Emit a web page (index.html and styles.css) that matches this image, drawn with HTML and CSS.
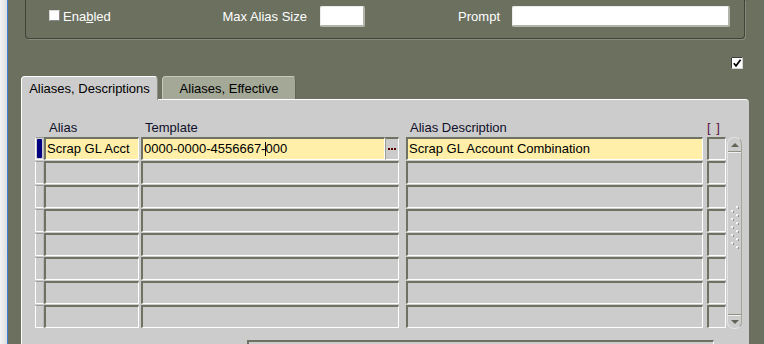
FILE: index.html
```html
<!DOCTYPE html>
<html lang="en">

<head>
  <meta charset="UTF-8">
  <meta name="viewport" content="width=device-width, initial-scale=1.0">
  <title>Account Aliases</title>
  <link rel="stylesheet" href="styles.css">
</head>

<body>
  <div class="window">
    <div class="edge"></div>
    <div class="canvas">

      <!-- header block -->
      <div class="frame">
        <label class="check-label"><span class="check"></span>Ena<u>b</u>led</label>
        <span class="field-prompt prompt-size">Max Alias Size</span>
        <span class="text-input input-size"></span>
        <span class="field-prompt prompt-prompt">Prompt</span>
        <span class="text-input input-prompt"></span>
      </div>

      <div class="options">
        <svg width="12" height="12" viewBox="0 0 12 12">
          <rect x="0.5" y="0.5" width="11" height="11" fill="#fff" stroke="#d4d4d4" />
          <path d="M0.5 11.5V0.5H11.5" fill="none" stroke="#3c3c3c" />
          <path d="M2.8 6.2l2.2 2.6L9.6 2.8" fill="none" stroke="#000" stroke-width="1.7" />
        </svg>
      </div>

      <div class="tabs">
        <div class="tab active">Aliases, Descriptions</div>
        <div class="tab">Aliases, Effective</div>
      </div>

      <div class="panel">
        <div class="grid-head">
          <span class="head-ind"></span>
          <span class="head-alias">Alias</span>
          <span class="head-template">Template</span>
          <span class="head-desc">Alias Description</span>
          <span class="head-dff">[ ]</span>
        </div>

        <div class="grid-body">
          <div class="rows">
            <div class="row current">
              <span class="ind"><span class="ind-mark"></span></span>
              <span class="cell alias">Scrap GL Acct</span>
              <span class="cell template short">0000-0000-4556667-<span class="caret"></span>000</span>
              <span class="lov"><svg width="8" height="2" viewBox="0 0 8 2"><rect x="0" y="0" width="2" height="2" fill="#5a0000" /><rect x="3" y="0" width="2" height="2" fill="#5a0000" /><rect x="6" y="0" width="2" height="2" fill="#5a0000" /></svg></span>
              <span class="cell desc">Scrap GL Account Combination</span>
              <span class="cell dff"></span>
            </div>
            <div class="row">
              <span class="ind"></span><span class="cell alias"></span><span class="cell template"></span><span class="cell desc"></span><span class="cell dff"></span>
            </div>
            <div class="row">
              <span class="ind"></span><span class="cell alias"></span><span class="cell template"></span><span class="cell desc"></span><span class="cell dff"></span>
            </div>
            <div class="row">
              <span class="ind"></span><span class="cell alias"></span><span class="cell template"></span><span class="cell desc"></span><span class="cell dff"></span>
            </div>
            <div class="row">
              <span class="ind"></span><span class="cell alias"></span><span class="cell template"></span><span class="cell desc"></span><span class="cell dff"></span>
            </div>
            <div class="row">
              <span class="ind"></span><span class="cell alias"></span><span class="cell template"></span><span class="cell desc"></span><span class="cell dff"></span>
            </div>
            <div class="row">
              <span class="ind"></span><span class="cell alias"></span><span class="cell template"></span><span class="cell desc"></span><span class="cell dff"></span>
            </div>
            <div class="row">
              <span class="ind"></span><span class="cell alias"></span><span class="cell template"></span><span class="cell desc"></span><span class="cell dff"></span>
            </div>
          </div>

          <div class="scrollbar">
            <div class="sb-btn sb-up"><span class="arrow-up"></span></div>
            <div class="sb-track">
              <svg class="grip" width="8" height="44" viewBox="0 0 8 44">
                <g fill="#f4f4f4">
                  <rect x="5" y="0" width="2" height="2" /><rect x="5" y="8" width="2" height="2" />
                  <rect x="5" y="16" width="2" height="2" /><rect x="5" y="24" width="2" height="2" />
                  <rect x="5" y="32" width="2" height="2" /><rect x="5" y="40" width="2" height="2" />
                  <rect x="0" y="4" width="2" height="2" /><rect x="0" y="12" width="2" height="2" />
                  <rect x="0" y="20" width="2" height="2" /><rect x="0" y="28" width="2" height="2" />
                  <rect x="0" y="36" width="2" height="2" />
                </g>
                <g fill="#8e9282">
                  <rect x="7" y="1" width="1" height="2" /><rect x="7" y="9" width="1" height="2" />
                  <rect x="7" y="17" width="1" height="2" /><rect x="7" y="25" width="1" height="2" />
                  <rect x="7" y="33" width="1" height="2" /><rect x="7" y="41" width="1" height="2" />
                  <rect x="2" y="5" width="1" height="2" /><rect x="2" y="13" width="1" height="2" />
                  <rect x="2" y="21" width="1" height="2" /><rect x="2" y="29" width="1" height="2" />
                  <rect x="2" y="37" width="1" height="2" />
                </g>
              </svg>
            </div>
            <div class="sb-btn sb-down"><span class="arrow-down"></span></div>
          </div>
        </div>

        <div class="footer-field"></div>
      </div>

    </div>
  </div>
</body>

</html>
```

FILE: styles.css
```css
body {
  margin: 0;
  font-family: "Liberation Sans", Arial, sans-serif;
  font-size: 13px;
  background-color: #6b705f;
  overflow: hidden;
}

.window {
  display: flex;
  height: 344px;
}

.edge {
  width: 7px;
  background: linear-gradient(to right, #f4f4f4, #dedede);
  border-right: 1px solid #3b7fd4;
}

.canvas {
  flex: 1;
  display: flex;
  flex-direction: column;
}

/* top group box */
.frame {
  display: flex;
  flex-shrink: 0;
  align-items: center;
  box-sizing: border-box;
  height: 39px;
  width: 720px;
  margin-left: 17px;
  padding-bottom: 5px;
  border: 1px solid #3f4438;
  border-top: none;
  border-radius: 0 0 4px 4px;
  box-shadow: 1px 1px 0 #878b7b;
  color: #fff;
}

.check-label {
  display: flex;
  align-items: center;
  width: 111px;
  margin-left: 23px;
}

.check {
  box-sizing: border-box;
  width: 11px;
  height: 11px;
  margin: -2px 3px 0 0;
  background: #fff;
  border: 1px solid #d8d8d8;
  border-right-color: #8a8a8a;
  border-bottom-color: #8a8a8a;
}

.field-prompt {
  text-align: right;
}

.prompt-size {
  width: 147px;
}

.prompt-prompt {
  width: 135px;
}

.text-input {
  box-sizing: border-box;
  height: 21px;
  background: #fff;
  border: 1px solid #ececec;
  border-right: 2px solid #b2b4aa;
  border-bottom: 2px solid #b2b4aa;
  border-radius: 2px;
}

.input-size {
  width: 45px;
  margin-left: 13px;
}

.input-prompt {
  width: 218px;
  margin-left: 12px;
}

.options {
  display: flex;
  flex-shrink: 0;
  justify-content: flex-end;
  box-sizing: border-box;
  height: 37px;
  padding: 18px 21px 0 0;
}

/* tabs */
.tabs {
  display: flex;
  flex-shrink: 0;
  align-items: flex-end;
  height: 23px;
  padding-left: 13px;
}

.tab {
  box-sizing: border-box;
  height: 23px;
  padding-top: 3px;
  line-height: 18px;
  text-align: center;
  color: #000;
  border-radius: 4px 4px 0 0;
}

.tab.active {
  position: relative;
  z-index: 1;
  width: 137px;
  height: 24px;
  margin-bottom: -1px;
  background: #cccccc;
  border-top: 1px solid #fff;
  border-left: 1px solid #fff;
  border-right: 1px solid #8c9080;
}

.tab:not(.active) {
  width: 134px;
  margin-left: 4px;
  background: #a3a897;
  border-top: 1px solid #c6cabb;
  border-left: 1px solid #c6cabb;
  border-right: 1px solid #5f6455;
}

.panel {
  flex: 1 0 auto;
  box-sizing: border-box;
  width: 728px;
  margin-left: 13px;
  padding: 20px 0 0 13px;
  background: #cccccc;
  border-top: 1px solid #fff;
  border-left: 1px solid #fff;
  border-radius: 0 4px 0 0;
}

/* multi-row block */
.grid-head {
  display: flex;
  height: 17px;
  line-height: 16px;
  color: #10102a;
  white-space: nowrap;
}

.head-ind {
  width: 9px;
}

.head-alias {
  width: 92px;
  padding-left: 5px;
}

.head-template {
  width: 261px;
  padding-left: 4px;
}

.head-desc {
  width: 297px;
  padding-left: 4px;
}

.head-dff {
  width: 19px;
  color: #5a1040;
  letter-spacing: 1px;
}

.grid-body {
  display: flex;
}

.rows {
  display: flex;
  flex-direction: column;
}

.row {
  display: flex;
  height: 23px;
  margin-bottom: 1px;
}

.ind {
  box-sizing: border-box;
  width: 9px;
  padding: 1px;
  border: 1px solid #fff;
  border-top-color: #9c9c9c;
  border-right-color: #b8b8b8;
}

.ind-mark {
  display: block;
  height: 100%;
  background: #000080;
  border-radius: 1px;
}

.cell {
  box-sizing: border-box;
  height: 23px;
  padding-left: 1px;
  line-height: 20px;
  color: #000;
  white-space: nowrap;
  overflow: hidden;
  border-top: 2px solid #6e7262;
  border-left: 2px solid #6e7262;
  border-right: 1px solid #fff;
  border-bottom: 1px solid #fff;
}

.current .cell.alias,
.current .cell.template,
.current .cell.desc {
  background: #ffefa9;
}

.alias {
  width: 95px;
  margin-right: 2px;
}

.template {
  width: 258px;
  margin-right: 7px;
}

.template.short {
  width: 244px;
  margin-right: 0;
}

.caret {
  display: inline-block;
  width: 0;
  height: 14px;
  margin-right: -1px;
  vertical-align: -3px;
  border-left: 1px solid #000;
}

.lov {
  box-sizing: border-box;
  display: flex;
  justify-content: center;
  align-items: center;
  width: 14px;
  height: 23px;
  margin-right: 7px;
  border-top: 2px solid #6e7262;
  border-left: 1px solid #9a9e8e;
  border-right: 1px solid #fff;
  border-bottom: 1px solid #fff;
}

.desc {
  width: 297px;
  margin-right: 4px;
}

.dff {
  width: 19px;
}

.scrollbar {
  display: flex;
  flex-direction: column;
  box-sizing: border-box;
  width: 15px;
  height: 192px;
  margin-left: 1px;
  border: 1px solid #e4e4e4;
  border-right-color: #a2a696;
  border-radius: 7px;
}

.sb-btn {
  display: flex;
  justify-content: center;
  align-items: center;
  height: 13px;
}

.sb-up {
  border-bottom: 1px solid #8e9282;
  box-shadow: 0 1px 0 #f0f0f0;
}

.sb-down {
  border-top: 1px solid #8e9282;
  box-shadow: inset 0 1px 0 #f0f0f0;
}

.arrow-up {
  border-left: 4px solid transparent;
  border-right: 4px solid transparent;
  border-bottom: 4px solid #5f6455;
}

.arrow-down {
  border-left: 4px solid transparent;
  border-right: 4px solid transparent;
  border-top: 4px solid #5f6455;
}

.sb-track {
  flex: 1;
  display: flex;
  flex-direction: column;
  align-items: center;
}

.grip {
  margin-top: 54px;
}

.footer-field {
  box-sizing: border-box;
  width: 467px;
  height: 20px;
  margin: 11px 0 0 212px;
  border-top: 2px solid #6e7262;
  border-left: 2px solid #6e7262;
  border-right: 1px solid #fff;
}
```
